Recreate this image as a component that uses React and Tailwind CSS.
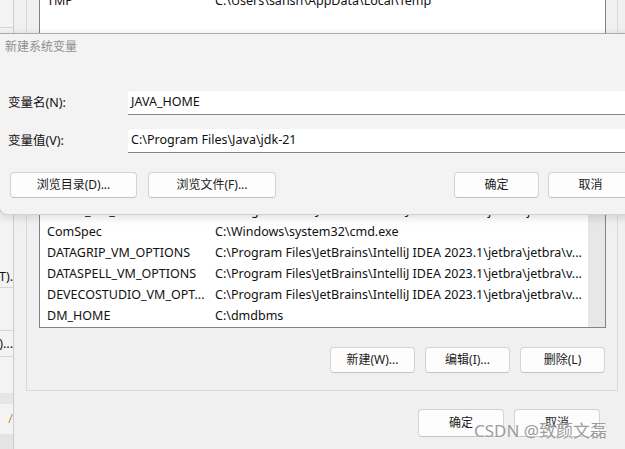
import React from 'react';

const font = "font-['Noto_Sans','Noto_Sans_CJK_SC',sans-serif]";

function Btn({ children, className = '' }) {
    return (
        <div
            className={`flex items-center justify-center bg-[#fdfdfd] border border-[#d3d3d3] border-b-[#c2c2c2] rounded-[4px] text-[12px] text-[#1a1a1a] ${className}`}
        >
            {children}
        </div>
    );
}

function Row({ name, value }) {
    return (
        <div className="flex h-[21px] items-center text-[12.5px] text-[#111] whitespace-nowrap">
            <div className="w-[175px] pl-[7px] overflow-hidden">{name}</div>
            <div className="flex-1 overflow-hidden">{value}</div>
        </div>
    );
}

const jb = 'C:\\Program Files\\JetBrains\\IntelliJ IDEA 2023.1\\jetbra\\jetbra\\v...';

export default function App() {
    return (
        <div className={`relative w-[625px] h-[449px] overflow-hidden bg-[#f0f0f0] ${font}`}>
            <div className="flex h-full">
                {/* slice of another window on the left */}
                <div className="w-[14px] shrink-0 border-r border-[#cdcdcd] bg-[#f3f3f3] flex flex-col text-[12.5px] text-[#111] overflow-hidden">
                    <div className="h-[28px] border-b border-[#d6d6d6]" />
                    <div className="h-[238px]" />
                    <div className="h-[21px] flex justify-end whitespace-nowrap leading-[21px]">(T).</div>
                    <div className="h-[43px] border-t border-[#d6d6d6]" />
                    <div className="h-[26px] border-t border-[#d6d6d6] flex justify-end whitespace-nowrap leading-[26px]">(I)...</div>
                    <div className="h-[37px] border-t border-[#d6d6d6]" />
                    <div className="h-[11px] bg-[#e6e6e6]" />
                    <div className="h-[30px] flex justify-end items-center text-[#c98a4a]">/</div>
                    <div className="flex-1 bg-[#e4e4e4]" />
                </div>

                {/* environment variables window */}
                <div className="flex-1 flex flex-col">
                    <div className="ml-[12px] w-[592px] h-[391px] shrink-0 border-l border-r border-b border-[#dadada] pl-[12px] flex flex-col">
                        <div className="-mt-[10px] w-[567px] border border-[#838383] bg-white flex flex-col">
                            <Row name="TMP" value="C:\Users\sansh\AppData\Local\Temp" />
                            <div className="h-[189px]" />
                            <div className="flex">
                                <div className="flex-1 flex flex-col">
                                    <Row name="CLION_VM_OPTIONS" value={jb} />
                                    <Row name="ComSpec" value="C:\Windows\system32\cmd.exe" />
                                    <Row name="DATAGRIP_VM_OPTIONS" value={jb} />
                                    <Row name="DATASPELL_VM_OPTIONS" value={jb} />
                                    <Row name="DEVECOSTUDIO_VM_OPT..." value={jb} />
                                    <Row name="DM_HOME" value="C:\dmdbms" />
                                </div>
                                <div className="w-[17px] bg-[#e7e7e7]" />
                            </div>
                        </div>
                        <div className="w-[567px] flex justify-end gap-[10px] mt-[19px] pr-[1px]">
                            <Btn className="w-[85px] h-[26px]">新建(W)...</Btn>
                            <Btn className="w-[85px] h-[26px]">编辑(I)...</Btn>
                            <Btn className="w-[85px] h-[26px]">删除(L)</Btn>
                        </div>
                    </div>
                    <div className="flex justify-end gap-[10px] mt-[18px] pr-[25px]">
                        <Btn className="w-[86px] h-[28px]">确定</Btn>
                        <Btn className="w-[86px] h-[28px]">取消</Btn>
                    </div>
                </div>
            </div>

            {/* 新建系统变量 dialog on top */}
            <div className="absolute top-[33px] left-[-1px] w-[660px] h-[182px] bg-[#f3f3f3] border-t border-l border-b border-t-[#ababab] border-l-[#cfcfcf] border-b-[#d2d2d2] rounded-bl-[8px] shadow-[0_2px_10px_rgba(0,0,0,0.14)] flex flex-col">
                <div className="pt-[5px] pl-[5px] text-[12px] leading-[16px] text-[#8e8e8e]">新建系统变量</div>
                <div className="flex items-center mt-[36px]">
                    <div className="w-[128px] pl-[8px] text-[12.5px] text-[#111]">变量名(N):</div>
                    <div className="flex-1 h-[24px] bg-white border-b border-[#868686] rounded-tl-[3px] pl-[3px] flex items-center text-[12.5px] text-[#111]">
                        JAVA_HOME
                    </div>
                </div>
                <div className="flex items-center mt-[14px]">
                    <div className="w-[128px] pl-[8px] text-[12.5px] text-[#111]">变量值(V):</div>
                    <div className="flex-1 h-[24px] bg-white border-b border-[#868686] rounded-tl-[3px] pl-[3px] flex items-center text-[12.5px] text-[#111]">
                        C:\Program Files\Java\jdk-21
                    </div>
                </div>
                <div className="flex mt-[19px] pl-[10px]">
                    <Btn className="w-[127px] h-[26px]">浏览目录(D)...</Btn>
                    <Btn className="w-[128px] h-[26px] ml-[11px]">浏览文件(F)...</Btn>
                    <Btn className="w-[85px] h-[26px] ml-[178px]">确定</Btn>
                    <Btn className="w-[85px] h-[26px] ml-[9px]">取消</Btn>
                </div>
            </div>

            {/* watermark */}
            <div className="absolute left-[474px] top-[420px] text-[17px] leading-[22px] text-[#9d9d9d] whitespace-nowrap [text-shadow:0_0_2px_#fff]">
                CSDN @致颜文磊
            </div>
        </div>
    );
}
